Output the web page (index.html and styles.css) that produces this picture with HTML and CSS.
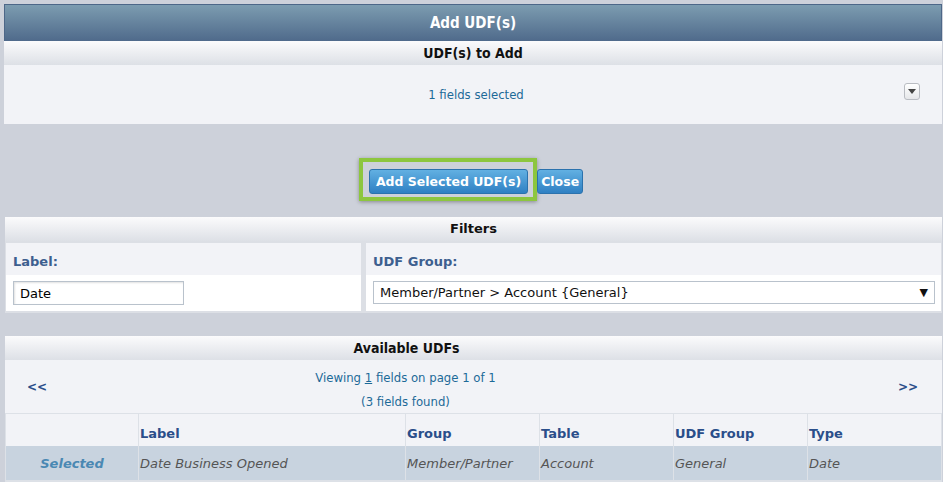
FILE: index.html
```html
<!DOCTYPE html>
<html>

<head>
    <title>Add UDF(s)</title>
    <link rel="stylesheet" href="styles.css">
</head>

<body>
    <div class="panel">
        <div class="panel-title">Add UDF(s)</div>
        <div class="section-head narrow">UDF(s) to Add</div>
        <div class="selected-box">
            <span class="selected-count">1 fields selected</span>
            <span class="drop-btn"><span class="drop-arrow"></span></span>
        </div>
    </div>

    <div class="actions">
        <span class="highlight"><button class="btn">Add Selected UDF(s)</button></span>
        <button class="btn btn-close">Close</button>
    </div>

    <div class="filters">
        <div class="section-head">Filters</div>
        <div class="filter-grid">
            <div class="filter-cell">
                <div class="filter-label">Label:</div>
                <div class="filter-input">
                    <input type="text" class="text-input" value="Date">
                </div>
            </div>
            <div class="filter-cell">
                <div class="filter-label">UDF Group:</div>
                <div class="filter-input">
                    <div class="select-box">
                        <span>Member/Partner &gt; Account {General}</span>
                        <span class="select-arrow">&#9660;</span>
                    </div>
                </div>
            </div>
        </div>
    </div>

    <div class="available">
        <div class="section-head narrow offset">Available UDFs</div>
        <div class="pager">
            <span class="pager-link">&lt;&lt;</span>
            <div class="pager-info">
                <div>Viewing <u>1</u> fields on page 1 of 1</div>
                <div>(3 fields found)</div>
            </div>
            <span class="pager-link">&gt;&gt;</span>
        </div>
        <table class="udf-table">
            <thead>
                <tr>
                    <th class="col-sel"></th>
                    <th class="col-label">Label</th>
                    <th class="col-mid">Group</th>
                    <th class="col-mid">Table</th>
                    <th class="col-mid">UDF Group</th>
                    <th>Type</th>
                </tr>
            </thead>
            <tbody>
                <tr class="row-selected">
                    <td class="sel-cell">Selected</td>
                    <td>Date Business Opened</td>
                    <td>Member/Partner</td>
                    <td>Account</td>
                    <td>General</td>
                    <td>Date</td>
                </tr>
            </tbody>
        </table>
    </div>
</body>

</html>
```

FILE: styles.css
```css
body {
    margin: 0;
    padding: 4px 1px 0 4px;
    background-color: #cdd1da;
    font-family: "DejaVu Sans", Verdana, sans-serif;
    font-size: 13px;
}

.narrow {
    font-family: "Liberation Sans Narrow", "DejaVu Sans Condensed", sans-serif;
}

/* Top panel */
.panel-title {
    height: 36px;
    line-height: 36px;
    text-align: center;
    color: #fff;
    font-family: "Liberation Sans Narrow", "DejaVu Sans Condensed", sans-serif;
    font-weight: bold;
    font-size: 15px;
    border: 1px solid #4d6788;
    border-bottom: none;
    background: linear-gradient(#7c9cb0, #4f6a8b);
}

.section-head {
    height: 24px;
    line-height: 24px;
    text-align: center;
    font-weight: bold;
    color: #111;
    background: linear-gradient(#fbfbfc, #dde0e6);
}

.section-head.narrow {
    font-size: 14px;
}

.section-head.offset {
    padding-right: 134px;
}

.selected-box {
    position: relative;
    height: 59px;
    line-height: 59px;
    text-align: center;
    background-color: #f2f3f7;
}

.selected-count {
    font-family: "Liberation Sans Narrow", "DejaVu Sans Condensed", sans-serif;
    font-size: 13px;
    color: #1d6a98;
    padding-left: 6px;
}

.drop-btn {
    position: absolute;
    right: 22px;
    top: 18px;
    width: 14px;
    height: 15px;
    border: 1px solid #b9bcc2;
    border-radius: 3px;
    background: linear-gradient(#fff, #e6e7ea);
    display: flex;
    align-items: center;
    justify-content: center;
}

.drop-arrow {
    width: 0;
    height: 0;
    border-left: 4px solid transparent;
    border-right: 4px solid transparent;
    border-top: 5px solid #444;
}

/* Buttons */
.actions {
    display: flex;
    justify-content: center;
    align-items: flex-start;
    padding: 34px 4px 16px 0;
}

.highlight {
    display: inline-block;
    border: 4px solid #8dc63f;
    padding: 7px 5px 3px 6px;
    box-shadow: 0 1px 4px rgba(0, 0, 0, 0.35);
}

.btn {
    height: 25px;
    padding: 0 6px;
    font-family: "DejaVu Sans", Verdana, sans-serif;
    font-weight: bold;
    font-size: 12.5px;
    color: #fff;
    border: 1px solid #2b72ad;
    border-radius: 3px;
    background: linear-gradient(#62b0e2, #2f80c3);
}

.btn-close {
    margin-top: 11px;
    margin-left: 0;
    padding: 0 3px;
}

/* Filters */
.filters {
    margin-left: 1px;
    background-color: #dcdfe5;
    padding-bottom: 2px;
}

.filter-grid {
    display: grid;
    grid-template-columns: 355px 1fr;
    gap: 5px;
    padding: 2px 1px 0 1px;
}

.filter-cell {
    background-color: #fff;
    padding-bottom: 6px;
}

.filter-label {
    height: 32px;
    line-height: 32px;
    padding: 3px 0 0 7px;
    box-sizing: border-box;
    font-weight: bold;
    color: #3d5f8f;
    background-color: #f2f3f7;
}

.filter-input {
    padding: 6px 6px 0 7px;
}

.text-input {
    width: 171px;
    height: 24px;
    box-sizing: border-box;
    border: 1px solid #b9c2cc;
    padding: 0 6px;
    font-family: "DejaVu Sans", Verdana, sans-serif;
    font-size: 13px;
    box-shadow: inset 1px 1px 2px rgba(0, 0, 0, 0.12);
}

.select-box {
    height: 21px;
    border: 1px solid #b9c2cc;
    display: flex;
    justify-content: space-between;
    align-items: center;
    padding: 0 6px;
    font-size: 13px;
    color: #111;
}

.select-arrow {
    font-size: 11px;
}

/* Available UDFs */
.available {
    margin-top: 23px;
    margin-left: 1px;
}

.pager {
    height: 53px;
    display: flex;
    align-items: center;
    justify-content: space-between;
    padding: 0 24px 0 22px;
    background-color: #f2f3f7;
    border-bottom: 1px solid #dde1e7;
}

.pager-link {
    font-weight: bold;
    color: #2a4e8a;
    font-size: 12px;
    padding-top: 1px;
}

.pager-info {
    font-family: "Liberation Sans Narrow", "DejaVu Sans Condensed", sans-serif;
    font-size: 13px;
    color: #1d6a98;
    text-align: center;
    line-height: 24px;
    padding: 6px 134px 0 0;
}

.udf-table {
    width: 100%;
    border-collapse: collapse;
    table-layout: fixed;
}

.udf-table th,
.udf-table td {
    border-left: 1px solid #dde1e7;
    border-right: 1px solid #dde1e7;
    text-align: left;
    padding: 0 1px;
}

.udf-table th {
    height: 32px;
    padding-top: 6px;
    box-sizing: border-box;
    font-weight: bold;
    color: #2a4e8a;
    background-color: #f2f3f7;
}

.udf-table td {
    height: 34px;
    font-style: italic;
    color: #555;
    border-bottom: 2px solid #dde1e7;
}

.row-selected {
    background-color: #c8d3df;
}

.udf-table .sel-cell {
    text-align: center;
    font-weight: bold;
    color: #4a88b3;
}

.col-sel {
    width: 133px;
}

.col-label {
    width: 267px;
}

.col-mid {
    width: 134px;
}
```
